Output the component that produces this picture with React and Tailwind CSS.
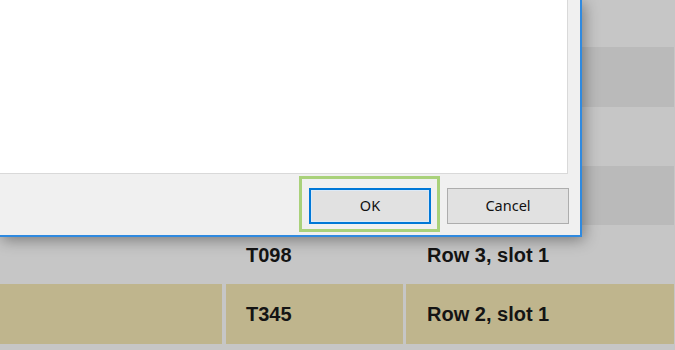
import React from "react";

const ROWS = [
  { h: "h-[47px]", tone: "light" },
  { h: "h-[60px]", tone: "dark" },
  { h: "h-[59px]", tone: "light" },
  { h: "h-[59px]", tone: "dark" },
  { h: "h-[59px]", tone: "light", code: "T098", place: "Row 3, slot 1" },
  { h: "h-[60px]", tone: "tan", code: "T345", place: "Row 2, slot 1" },
  { h: "h-[6px]", tone: "light" },
];

const CELL_BG = {
  light: "bg-[#c6c6c6]",
  dark: "bg-[#bababa]",
  tan: "bg-[#bfb58d]",
};

function TableRow({ row }) {
  const bg = CELL_BG[row.tone];
  return (
    <div className={`flex ${row.h}`}>
      <div className={`w-[222px] ${bg}`} />
      <div className={`ml-[4px] w-[177px] ${bg} flex items-center pl-[20px]`}>
        {row.code}
      </div>
      <div className={`ml-[3px] w-[268px] ${bg} flex items-center pl-[21px]`}>
        {row.place}
      </div>
    </div>
  );
}

function Dialog() {
  return (
    <div className="absolute left-0 top-0 w-[582px] h-[237px] bg-[#f0f0f0] border-r-2 border-b-2 border-[#2f8ae0] shadow-[2px_3px_14px_rgba(0,0,0,0.38)] flex flex-col">
      <div className="flex-1 mr-[12px] bg-white border-r border-b border-[#d9d9d9]" />
      <div className="h-[61px] flex justify-end items-start gap-[16px] pt-[14px] pr-[11px] text-[14.5px] font-normal text-[#111] font-['Noto_Sans',sans-serif]">
        <div className="relative">
          <button className="w-[122px] h-[36px] bg-[#e1e1e1] border-2 border-[#0078d7] shadow-[inset_0_0_0_1px_#dbe9f7]">
            OK
          </button>
          <div className="absolute left-[-10px] top-[-12px] w-[141px] h-[56px] border-[3px] border-[#a9d17a]" />
        </div>
        <button className="w-[122px] h-[36px] bg-[#e1e1e1] border border-[#adadad]">
          Cancel
        </button>
      </div>
    </div>
  );
}

export default function App() {
  return (
    <div className="relative w-[675px] h-[350px] overflow-hidden bg-[#c6c6c6] font-['Liberation_Sans',Arial,sans-serif] font-bold text-[20px] text-[#141414]">
      {ROWS.map((row, i) => (
        <TableRow key={i} row={row} />
      ))}
      <Dialog />
    </div>
  );
}
